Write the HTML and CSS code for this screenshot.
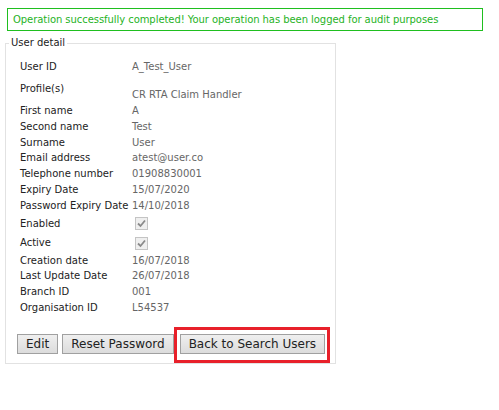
FILE: index.html
```html
<!DOCTYPE html>
<html>
<head>
<meta charset="utf-8">
<link rel="stylesheet" href="styles.css">
</head>
<body>
<div class="msg">Operation successfully completed! Your operation has been logged for audit purposes</div>
<fieldset class="panel">
  <legend class="legend">User detail</legend>
  <div class="details">
    <div class="row first"><span class="lbl">User ID</span><span class="val">A_Test_User</span></div>
    <div class="row profile"><span class="lbl">Profile(s)</span><span class="val">CR RTA Claim Handler</span></div>
    <div class="row"><span class="lbl">First name</span><span class="val">A</span></div>
    <div class="row"><span class="lbl">Second name</span><span class="val">Test</span></div>
    <div class="row"><span class="lbl">Surname</span><span class="val">User</span></div>
    <div class="row"><span class="lbl">Email address</span><span class="val">atest@user.co</span></div>
    <div class="row"><span class="lbl">Telephone number</span><span class="val">01908830001</span></div>
    <div class="row"><span class="lbl">Expiry Date</span><span class="val">15/07/2020</span></div>
    <div class="row"><span class="lbl">Password Expiry Date</span><span class="val">14/10/2018</span></div>
    <div class="row cbrow"><span class="lbl">Enabled</span><span class="val"><span class="cb"><svg viewBox="0 0 11 11" width="11" height="11"><path d="M2 5.5 L4.5 8 L9 2.5" fill="none" stroke="#8a8a8a" stroke-width="1.8"/></svg></span></span></div>
    <div class="row cbrow"><span class="lbl">Active</span><span class="val"><span class="cb"><svg viewBox="0 0 11 11" width="11" height="11"><path d="M2 5.5 L4.5 8 L9 2.5" fill="none" stroke="#8a8a8a" stroke-width="1.8"/></svg></span></span></div>
    <div class="row"><span class="lbl">Creation date</span><span class="val">16/07/2018</span></div>
    <div class="row"><span class="lbl">Last Update Date</span><span class="val">26/07/2018</span></div>
    <div class="row"><span class="lbl">Branch ID</span><span class="val">001</span></div>
    <div class="row"><span class="lbl">Organisation ID</span><span class="val">L54537</span></div>
  </div>
  <div class="actions">
    <button class="btn btn-edit">Edit</button>
    <button class="btn btn-reset">Reset Password</button>
    <button class="btn btn-back">Back to Search Users</button>
    <span class="highlight"></span>
  </div>
</fieldset>
</body>
</html>
```
FILE: styles.css
```css
html, body {
  margin: 0;
  padding: 0;
  background: #ffffff;
}
body {
  font-family: "DejaVu Sans", Verdana, sans-serif;
  font-size: 10px;
  color: #222;
}
.msg {
  box-sizing: border-box;
  margin: 8px 0 0 7px;
  width: 476px;
  height: 23px;
  border: 1px solid #1fbf1f;
  color: #1fb31f;
  padding: 0 0 0 5px;
  line-height: 21px;
  letter-spacing: -0.06px;
  white-space: nowrap;
}
.panel {
  box-sizing: border-box;
  margin: 5px 0 0 5px;
  width: 331px;
  height: 328px;
  border: 1px solid #e2e2e2;
  padding: 0;
  position: relative;
}
.legend {
  padding: 0 2px;
  margin-left: 3px;
  color: #222;
  line-height: 14px;
}
.details {
  padding: 9px 0 0 14px;
}
.row {
  display: flex;
  height: 15.8px;
  line-height: 15.8px;
  white-space: nowrap;
}
.row.profile {
  height: 28.3px;
  padding-top: 6.3px;
  box-sizing: border-box;
}
.row.profile .val {
  padding-top: 6px;
}
.row.cbrow {
  height: 19.5px;
  line-height: 19.5px;
}
.lbl {
  width: 112px;
  flex: none;
  color: #222;
}
.val {
  color: #666;
}
.cb {
  display: inline-flex;
  align-items: center;
  justify-content: center;
  box-sizing: border-box;
  width: 13px;
  height: 13px;
  margin-left: 3px;
  vertical-align: middle;
  border: 1px solid #c4c4c4;
  background: #efefef;
}
.actions {
  position: relative;
  display: flex;
  gap: 4px;
  padding: 18px 0 0 11px;
}
.btn {
  font-family: "DejaVu Sans", Verdana, sans-serif;
  font-size: 12px;
  color: #222;
  height: 20px;
  padding: 0 8px;
  border: 1px solid #a0a0a0;
  border-radius: 0;
  background: linear-gradient(#efefef, #dcdcdc);
  line-height: 18px;
}
.btn-back {
  margin-left: 2px;
}
.highlight {
  position: absolute;
  left: 168px;
  top: 11px;
  width: 156px;
  height: 36px;
  box-sizing: border-box;
  border: 3px solid #e8202a;
  pointer-events: none;
}
```
